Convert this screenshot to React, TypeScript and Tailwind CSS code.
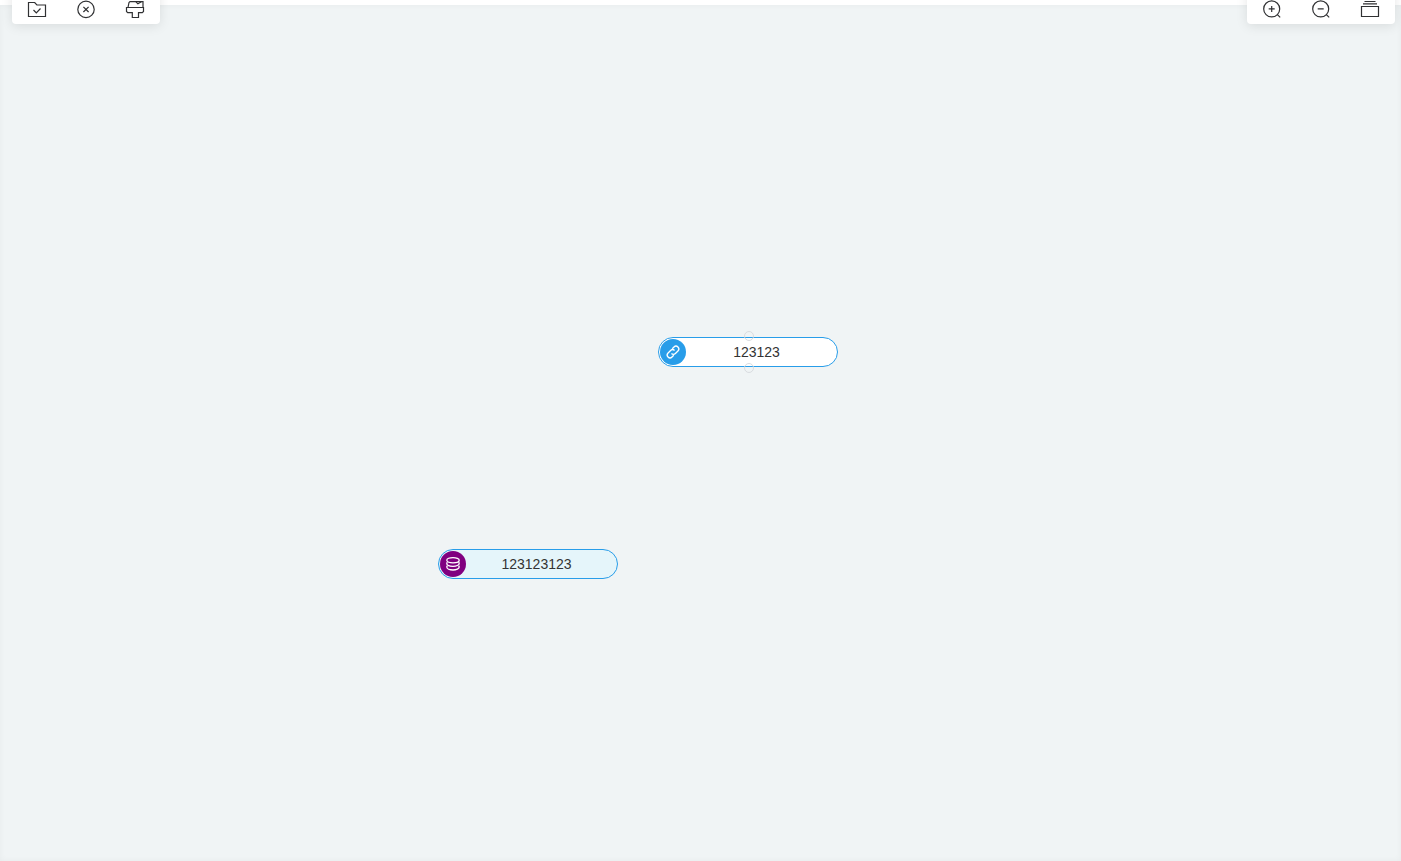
import type { ReactNode } from "react";

type Tool = { label: string; icon: ReactNode };

const fileTools: Tool[] = [
  {
    label: "Save",
    icon: (
      <>
        <path d="M1.5 17.5V3.5h6.2l2.2 2.5h8.6v11.5z" />
        <path d="M6.5 11l2.8 2.8 4.2-4.3" />
      </>
    ),
  },
  {
    label: "Close",
    icon: (
      <>
        <circle cx="10" cy="10.4" r="8.2" />
        <path d="M7.4 7.8l5.2 5.2M12.6 7.8l-5.2 5.2" />
      </>
    ),
  },
  {
    label: "Clear",
    icon: (
      <>
        <path d="M3 8.5L4 3.5l1-.9H18v5.9" />
        <path d="M11 2.8l1.9 2L16.4 2.8" />
        <path d="M1.5 8.5h17v4l-1.2 1.2h-3.8v4.8H7.3v-4.8H2.7l-1.2-1.2z" />
      </>
    ),
  },
];

const viewTools: Tool[] = [
  {
    label: "Zoom in",
    icon: (
      <>
        <circle cx="9.7" cy="9.9" r="8" />
        <path d="M15.4 15.6l2.8 2.8M6.7 9.9h6M9.7 6.9v6" />
      </>
    ),
  },
  {
    label: "Zoom out",
    icon: (
      <>
        <circle cx="9.7" cy="9.9" r="8" />
        <path d="M15.4 15.6l2.8 2.8M6.7 9.9h6" />
      </>
    ),
  },
  {
    label: "Fit view",
    icon: <path d="M4.5 2.5h11M3 4.8h14M1.5 7.5h17v10h-17z" />,
  },
];

const nodes = [
  {
    id: "link",
    text: "123123",
    position: "left-[658px] top-[332px]",
    background: "bg-white",
    iconBackground: "bg-[#289de9]",
    ports: true,
    icon: (
      <g transform="rotate(-45 8 8)">
        <path d="M6.3 10.8H3.8a2.8 2.8 0 0 1 0-5.6h3.6a2.8 2.8 0 0 1 2.8 2.8" />
        <path d="M9.7 5.2h2.5a2.8 2.8 0 0 1 0 5.6H8.6A2.8 2.8 0 0 1 5.8 8" />
      </g>
    ),
  },
  {
    id: "database",
    text: "123123123",
    position: "left-[438px] top-[544px]",
    background: "bg-[#e5f5fa]",
    iconBackground: "bg-[#800080]",
    ports: false,
    icon: (
      <>
        <ellipse cx="8" cy="4.3" rx="6.2" ry="2.6" />
        <path d="M2.4 6.3c-.4.4-.6.8-.6 1.3 0 1.5 2.8 2.7 6.2 2.7s6.2-1.2 6.2-2.7c0-.5-.2-.9-.6-1.3" />
        <path d="M2.4 9.7c-.4.4-.6.9-.6 1.4 0 1.6 2.8 2.9 6.2 2.9s6.2-1.3 6.2-2.9c0-.5-.2-1-.6-1.4" />
      </>
    ),
  },
];

const Toolbar = ({ tools, label }: { tools: Tool[]; label: string }) => {
  return (
    <div
      role="toolbar"
      aria-label={label}
      className="flex h-10 w-[148px] items-end rounded-sm bg-white pb-0.5 shadow-[0_2px_12px_rgba(0,0,0,0.1)]"
    >
      {tools.map((tool) => (
        <button
          key={tool.label}
          type="button"
          aria-label={tool.label}
          className="flex h-6 flex-1 cursor-pointer items-start justify-center pt-px"
        >
          <svg
            viewBox="0 0 20 20"
            className="size-5 fill-none stroke-[#303133]"
            strokeWidth="1.2"
          >
            {tool.icon}
          </svg>
        </button>
      ))}
    </div>
  );
};

const Port = ({ side }: { side: string }) => {
  return (
    <span
      className={`absolute left-[85px] size-[10px] rounded-full border border-[#d9dce0] ${side}`}
    />
  );
};

const App = () => {
  return (
    <div className="relative flex min-h-screen flex-col overflow-hidden bg-white pt-[5px] font-['Liberation_Sans',Arial,sans-serif] text-sm text-[#333]">
      <main className="relative flex-1 bg-[#f0f4f5] shadow-[inset_0_0_6px_rgba(0,0,0,0.04)]">
        {nodes.map((node) => (
          <div
            key={node.id}
            className={`absolute flex h-[30px] w-[180px] items-center rounded-full border border-[#289de9] pr-[10px] pl-px ${node.position} ${node.background}`}
          >
            <span
              className={`flex size-[26px] items-center justify-center rounded-full ${node.iconBackground}`}
            >
              <svg
                viewBox="0 0 16 16"
                className="size-4 fill-none stroke-white"
                strokeWidth="1.3"
              >
                {node.icon}
              </svg>
            </span>
            <span className="flex-1 text-center">{node.text}</span>
            {node.ports && (
              <>
                <Port side="-top-[7px]" />
                <Port side="-bottom-[7px]" />
              </>
            )}
          </div>
        ))}
      </main>

      {/* toolbars float over the top edge of the canvas */}
      <header className="absolute inset-x-0 -top-4 flex justify-between pr-[6px] pl-3">
        <Toolbar tools={fileTools} label="File" />
        <Toolbar tools={viewTools} label="View" />
      </header>
    </div>
  );
};

export default App;
